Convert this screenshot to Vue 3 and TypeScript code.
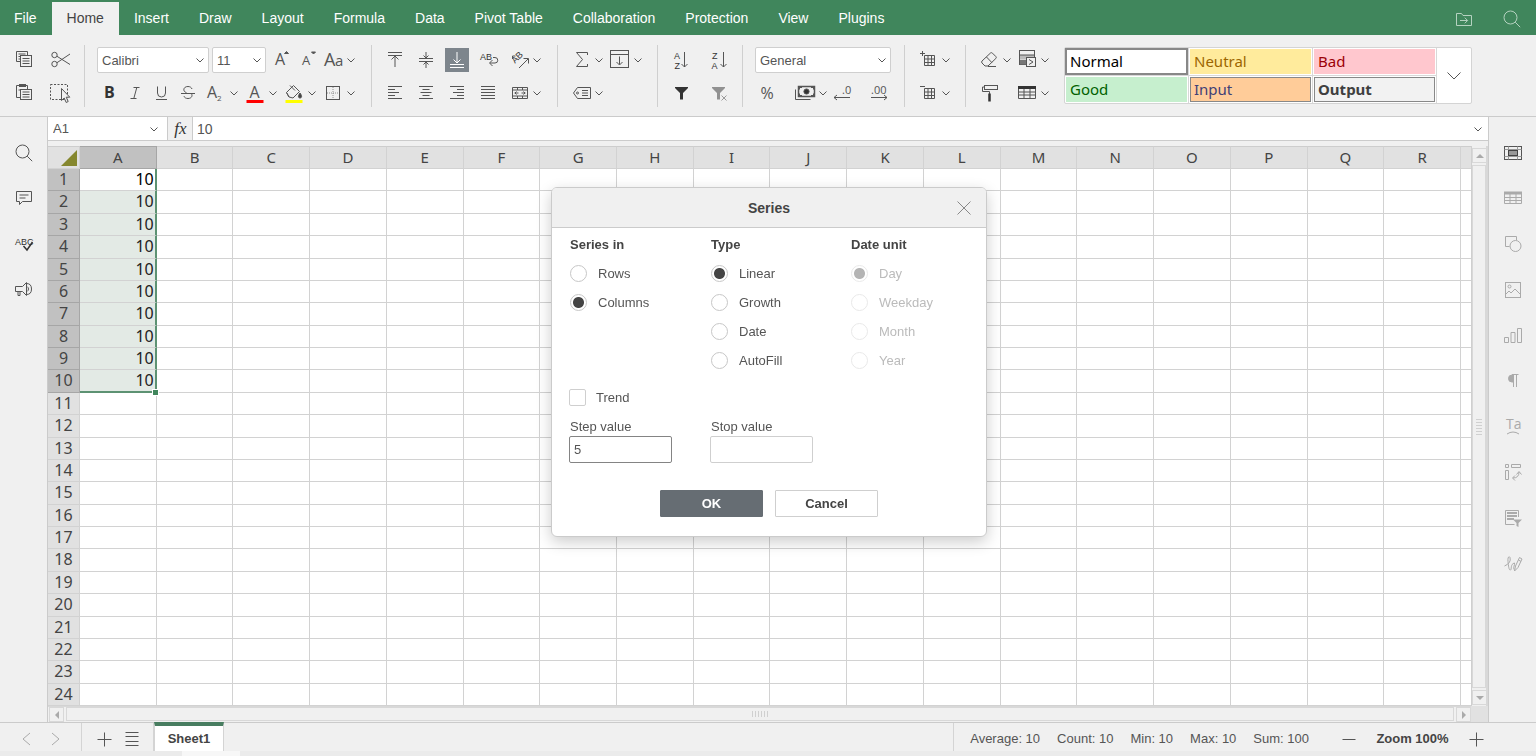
<script setup lang="ts">
import { h, ref } from 'vue'

const icons: Record<string, string> = {
  search: '<circle cx="10.5" cy="10.5" r="6.5"/><path d="M15.2 15.2l5 5"/>',
  folder: '<path d="M4.5 18.5v-12h5l1.500 2h8.500v10zM8 13.500h7.500M12.800 10.700l2.800 2.800-2.800 2.800"/>',
  copy: '<path d="M8 13.500H4.500v-10h11V7M6.500 6h7M6.500 8.500H8M6.500 11H8"/><rect x="8.500" y="7.500" width="11" height="11"/><path d="M10.500 10.500h7M10.500 13h7M10.500 15.500h7"/>',
  cut: '<circle cx="5.500" cy="7" r="2.700"/><circle cx="5.500" cy="16" r="2.700"/><path d="M8 8.300l13 8.200M8 14.700l13-8.700"/>',
  paste: '<path d="M8 16.500H4.500v-12h11V8M6.500 9H8"/><path d="M7 4.500h7" stroke-width="3"/><rect x="8.500" y="8.500" width="11" height="10"/><path d="M10.500 11h7M10.500 13.500h7M10.500 16h7"/>',
  selectAll: '<path d="M1.500 3.500h17v15h-17z" stroke-dasharray="2 1.500"/><path d="M12.500 7.500v12l2.700-2.500 2 4.500 2-1-2-4.300h3.600z" fill="#f0f0f0"/>',
  grow: '<text x="5" y="17" font-size="16">A</text><path d="M14.500 5.500l2-2 2 2z" fill="currentColor"/>',
  shrink: '<text x="6" y="17" font-size="13">A</text><path d="M15.500 4l2 2 2-2z" fill="currentColor"/>',
  caseAa: '<text x="3" y="18" font-size="18">A</text><text x="14" y="18" font-size="15">a</text>',
  bold: '<text x="6" y="17" font-size="16" font-weight="700" class="dark">B</text>',
  italic: '<path d="M9.500 6.500h6M6.500 17.500h6M12.800 6.500l-3 11"/>',
  underline: '<path d="M7.500 5.500v6.500a4 4 0 0 0 8 0V5.500M6 18.500h11"/>',
  strike: '<path d="M16 8c-.5-1.500-2-2.500-4-2.500-5 0-5.500 5-1.500 6.200M8 15.200c.5 1.500 2 2.300 4 2.300 4 0 5-3.500 3-5.300M5 12.500h14"/>',
  sub: '<text x="3" y="17" font-size="16">A</text><text x="13" y="19.500" font-size="8">2</text>',
  fontColor: '<text x="6.500" y="17" font-size="16">A</text><path d="M3.500 20.500h17" stroke="#f00" stroke-width="3"/>',
  fillColor: '<path d="M4.500 11.500l7-7 6 6-6.500 6.500-4-1zM4.500 11.500l2.500 4.500M8 4.500l5 5"/><path d="M18 12c3 4 1 5 0 5s-3-1 0-5z" fill="#444"/><path d="M3.500 20.500h17" stroke="#ff0" stroke-width="3"/>',
  borders: '<rect x="5.500" y="5.500" width="13" height="13"/><path d="M12 6v12M6 12h12" stroke-dasharray="1 1" opacity=".6"/>',
  top: '<path d="M5 4.500h14M5 7.500h14M12 8v11M8.500 11.500L12 8l3.500 3.500"/>',
  middle: '<path d="M5 10.500h14M5 13.500h14M12 4v6M9.500 7.500L12 10l2.500-2.500M12 20v-6M9.500 16.500L12 14l2.500 2.500"/>',
  bottom: '<path d="M5 16.500h14M5 19.500h14M12 4v11M8.500 11.500L12 15l3.500-3.500"/>',
  wrap: '<text x="4" y="12" font-size="9" class="dark plain">AB</text><path d="M17 9.500h2a2.700 2.700 0 0 1 0 5.500h-5M16.500 12L13.500 15l3 3"/>',
  orient: '<text x="6" y="15" font-size="9" class="dark plain" transform="rotate(-45 8 13)">AB</text><path d="M12 20l9-9M16.500 10.500H21.500V15.500M5.500 11v-3h3"/>',
  left: '<path d="M5 5.500h14M5 8.500h7M5 11.500h11M5 14.500h7M5 17.500h14"/>',
  center: '<path d="M5 5.500h14M8.500 8.500h7M6.500 11.500h11M8.500 14.500h7M5 17.500h14"/>',
  right: '<path d="M5 5.500h14M12 8.500h7M8 11.500h11M12 14.500h7M5 17.500h14"/>',
  justify: '<path d="M5 5.500h14M5 8.500h14M5 11.500h14M5 14.500h14M5 17.500h14"/>',
  merge: '<path d="M5.500 6.500h15v11h-15zM5.500 9h15M5.500 15h15M10.500 6.500V9M15.500 6.500V9M10.500 15v2.500M15.500 15v2.500M7.500 12h4M14.500 12h4M9.500 10.500L8 12l1.500 1.500M16.500 10.500L18 12l-1.500 1.500"/>',
  sum: '<path d="M18.500 7V4.500h-11l6 7-6 7h11V16"/>',
  fillDown: '<rect x="2.500" y="2.500" width="18" height="17"/><path d="M2.500 6.500h18M11.500 8.500v8M8.500 14l3 3 3-3"/>',
  named: '<path d="M8.500 6.500h13v11h-13l-4-5.500zM13 9.500h6M13 12h6M13 14.500h6"/><circle cx="8.500" cy="12" r="1"/>',
  sortAz: '<text x="5" y="10.500" font-size="9" class="dark plain">A</text><text x="5.500" y="20.500" font-size="9" class="dark plain">Z</text><path d="M15.500 4v15M12.500 16l3 3 3-3"/>',
  sortZa: '<text x="5" y="10.500" font-size="9" class="dark plain">Z</text><text x="4.500" y="20.500" font-size="9" class="dark plain">A</text><path d="M16.500 4v15M13.500 16l3 3 3-3"/>',
  filter: '<path d="M6 6h13v1l-5 5v6.500h-3V12L6 7z" fill="#333" stroke="none"/>',
  clearFilter: '<g opacity=".55"><path d="M5 6h13v1l-5 5v6.500h-3V12L5 7z" fill="#444" stroke="none"/><path d="M14.500 14.500l5 5M19.500 14.500l-5 5"/></g>',
  percent: '<text x="5.500" y="18" font-size="16">%</text>',
  money: '<path d="M2.500 8.500v10h15" /><rect x="5.500" y="5.500" width="16" height="10" stroke-width="1.500"/><circle cx="13.500" cy="10.500" r="2.600" fill="#333"/><path d="M6 8.500V6h3M18 6h3v2.500M6 12.500V15h3M18 15h3v-2.500" stroke-width="2"/>',
  decLess: '<text x="13" y="13" font-size="11">.0</text><path d="M5 16.500h16M8 14l-3 2.500L8 19"/>',
  decMore: '<text x="4" y="13" font-size="11">.00</text><path d="M4 16.500h16M17 14l3 2.500-3 2.500"/>',
  insertCells: '<path d="M8.500 7.500h10v10h-10zM8.500 11h10M8.500 14.500h10M12 7.500v10M15.500 7.500v10M4 5.500h5M6.500 3v5"/>',
  deleteCells: '<path d="M8.500 7.500h10v10h-10zM8.500 11h10M8.500 14.500h10M12 7.500v10M15.500 7.500v10M4 5.500h5"/>',
  eraser: '<path d="M5 13l8.500-8q1-.8 2 .2l3.300 3.300q1 1 0 2l-7.800 7.500H8L5 15q-.8-1 0-2zM9.500 9l5.300 5.500M11 18.500h8"/>',
  cond: '<rect x="4.500" y="2.500" width="15" height="14"/><path d="M5 7h14v4.500H5z" fill="#bbb" stroke="none"/><path d="M5 12h7v4.500H5z" fill="#777" stroke="none"/><path d="M4.500 7h15"/><rect x="11.500" y="9.500" width="9" height="9" fill="#f0f0f0"/><path d="M14 11.500l4 2.500-4 2.500"/>',
  roller: '<rect x="7.500" y="4.500" width="13" height="4"/><path d="M7.500 6H5.500v4.500h7V13"/><path d="M12.500 12.500v8" stroke="#333" stroke-width="2.500"/>',
  table: '<path d="M3.500 5.500h17v12h-17zM3.500 11h17M3.500 14h17M9 7v10.500M15 7v10.500"/><path d="M3 6.500h18" stroke="#333" stroke-width="3"/>',
  comment: '<path d="M4.500 5.500h15v10h-9L7.500 18.500v-3h-3zM7.500 9h9M7.500 12h6"/>',
  spell: '<text x="3" y="12.500" font-size="9" class="dark plain">ABC</text><path d="M11.500 14l3.500 4L20.500 10" stroke="#333" stroke-width="1.500"/>',
  speaker: '<path d="M3.500 9.500h7l4-4v13l-4-4h-7zM6 14.500v4h2v-4M14.500 6.500q5 0 5 5.500t-5 5.500M15 9.500q1.500 1 1.500 2.500T15 14.500"/>',
  cellSet: '<rect x="3.500" y="5.500" width="17" height="13" stroke="#555"/><path d="M7.500 5.500v13M16.500 5.500v13M3.500 8.500h17M3.500 15.500h17" stroke="#999"/><rect x="7.500" y="9.500" width="9" height="5" fill="#999" stroke="#444"/>',
  tableSet: '<path d="M3.500 6.500h17v11h-17zM3.500 11.500h17M3.500 14.500h17M9 8v9.500M15 8v9.500"/><path d="M3 7h18" stroke-width="3"/>',
  shape: '<path d="M8.500 14.500h-4v-10h11V8"/><circle cx="14.500" cy="14" r="5.500"/>',
  image: '<rect x="4.500" y="4.500" width="15" height="15"/><circle cx="8.500" cy="8.500" r="1.500"/><path d="M5 16l3-3 2 2 4-4 5.500 5.500"/>',
  chart: '<path d="M3.500 14.500h4v5h-4zM10 9.500h4v10h-4zM16.500 5.500h4v14h-4z"/>',
  para: '<path d="M12.500 6H11a3.500 3.500 0 0 0 0 7h1.500z" fill="currentColor"/><path d="M12.500 6v12M15.500 6v12M11 5.500h6.500"/>',
  textArt: '<text x="5" y="15" font-size="14">Ta</text><path d="M6 20q6-4 12 0"/>',
  pivot: '<path d="M4.500 4.500h3v3h-3zM10.500 4.500h9v3h-9zM4.500 10.500h3v9h-3zM12 18q6 0 6-6M15.500 14.500L18 11.500l2.500 3M14 15.500L11.500 18l2.500 2.500"/>',
  slicer: '<path d="M17.500 11V4.500h-13v14h9"/><path d="M6 7h10M6 10h10M6 13h7" stroke-width="1.800"/><path d="M12 13.500h9l-3.500 3.500v4l-2-1v-3z" fill="currentColor" stroke="none"/>',
  sign: '<path d="M3.500 15q7-3 5.500-8.500c-1-2-2.500 0-2 4 .5 5 1 9 2.500 8.500s-.5-6 4-7c.5 2-1.500 4-.5 6.500"/><path d="M13.500 20l1-5L18.500 6.500l2.500 1.500-4 8.500zM17.500 9l2.500 1.500"/>',
  prev: '<path d="M15 6l-7 6 7 6"/>',
  next: '<path d="M9 6l7 6-7 6"/>',
  plus: '<path d="M12.500 5.500v14M5.500 12.500h14"/>',
  minus: '<path d="M5.500 12.500h13"/>',
  list: '<path d="M5.500 5.500h13M5.500 9.500h13M5.500 14.500h13M5.500 18.500h13"/>',
  close: '<path d="M5.500 5.500l13 13M18.500 5.500l-13 13"/>',
}

const Icon = (props: { name: string }) =>
  h('svg', {
    viewBox: '0 0 24 24', width: 24, height: 24, fill: 'none', stroke: 'currentColor',
    class: 'ico', 'aria-hidden': 'true', innerHTML: icons[props.name],
  })
Icon.props = ['name']

const Caret = () =>
  h('svg', { viewBox: '0 0 12 12', width: 12, height: 12, fill: 'none', stroke: 'currentColor', class: 'caret', 'aria-hidden': 'true' },
    [h('path', { d: 'M2.500 4.500L6 8l3.500-3.500' })])

interface Tool { icon: string; label: string; menu?: boolean; wide?: boolean; active?: boolean; gap?: boolean }
const t = (icon: string, label: string, o: Partial<Tool> = {}): Tool => ({ icon, label, ...o })
const menu = { menu: true }

interface Combo { label: string; value: string; size: string }
interface Group { id: string; rows: { combos?: Combo[]; tools: Tool[] }[] }
const groups: Group[] = [
  { id: 'clip', rows: [
    { tools: [t('copy', 'Copy'), t('cut', 'Cut')] },
    { tools: [t('paste', 'Paste'), t('selectAll', 'Select all')] } ] },
  { id: 'font', rows: [
    { combos: [{ label: 'Font', value: 'Calibri', size: 'large' }, { label: 'Font size', value: '11', size: 'small' }],
      tools: [t('grow', 'Increase font size', { wide: true }), t('shrink', 'Decrease font size', { wide: true }), t('caseAa', 'Change case', menu)] },
    { tools: [t('bold', 'Bold', { wide: true }), t('italic', 'Italic', { wide: true }), t('underline', 'Underline', { wide: true }), t('strike', 'Strikeout', { wide: true }),
      t('sub', 'Subscript', { menu: true, gap: true }), t('fontColor', 'Font color', { menu: true, gap: true }), t('fillColor', 'Fill color', { menu: true, gap: true }), t('borders', 'Borders', { menu: true, gap: true })] } ] },
  { id: 'align', rows: [
    { tools: [t('top', 'Align top'), t('middle', 'Align middle'), t('bottom', 'Align bottom', { active: true }), t('wrap', 'Wrap text'), t('orient', 'Orientation', menu)] },
    { tools: [t('left', 'Align left'), t('center', 'Align center'), t('right', 'Align right'), t('justify', 'Justified'), t('merge', 'Merge and center', menu)] } ] },
  { id: 'edit', rows: [
    { tools: [t('sum', 'Summation', menu), t('fillDown', 'Fill', menu)] },
    { tools: [t('named', 'Named ranges', menu)] } ] },
  { id: 'sort', rows: [
    { tools: [t('sortAz', 'Sort ascending'), t('sortZa', 'Sort descending')] },
    { tools: [t('filter', 'Filter'), t('clearFilter', 'Clear filter')] } ] },
  { id: 'number', rows: [
    { combos: [{ label: 'Number format', value: 'General', size: 'wide' }], tools: [] },
    { tools: [t('percent', 'Percent style'), t('money', 'Accounting style', { menu: true, gap: true }), t('decLess', 'Decrease decimal'), t('decMore', 'Increase decimal', { gap: true })] } ] },
  { id: 'cells', rows: [
    { tools: [t('insertCells', 'Insert cells', menu)] },
    { tools: [t('deleteCells', 'Delete cells', menu)] } ] },
  { id: 'format', rows: [
    { tools: [t('eraser', 'Clear', menu), t('cond', 'Conditional formatting', menu)] },
    { tools: [t('roller', 'Copy style'), t('table', 'Format as table', { menu: true, gap: true })] } ] },
]

const tabs = ['File', 'Home', 'Insert', 'Draw', 'Layout', 'Formula', 'Data', 'Pivot Table', 'Collaboration', 'Protection', 'View', 'Plugins']
const cellStyles = ['Normal', 'Neutral', 'Bad', 'Good', 'Input', 'Output']
const leftTools = [['search', 'Find'], ['comment', 'Comments'], ['spell', 'Spell checking'], ['speaker', 'Feedback']]
const rightTools = [['cellSet', 'Cell settings'], ['tableSet', 'Table settings'], ['shape', 'Shape settings'], ['image', 'Image settings'], ['chart', 'Chart settings'],
  ['para', 'Paragraph settings'], ['textArt', 'Text Art settings'], ['pivot', 'Pivot table settings'], ['slicer', 'Slicer settings'], ['sign', 'Signature settings']]
const columns = 'ABCDEFGHIJKLMNOPQR'.split('')
const stats = ['Average: 10', 'Count: 10', 'Min: 10', 'Max: 10', 'Sum: 100']

const seriesIn = ref('Columns')
const seriesType = ref('Linear')
const dateUnit = ref('Day')
const trend = ref(false)
const step = ref('5')
const stop = ref('')
const nameBox = ref('A1')
const formula = ref('10')
</script>

<template>
  <div class="app">
    <header class="tabs">
      <nav>
        <button v-for="tab in tabs" :key="tab" :class="{ current: tab === 'Home' }">{{ tab }}</button>
      </nav>
      <div class="tab-actions">
        <button aria-label="Open file location"><Icon name="folder" /></button>
        <button aria-label="Search"><Icon name="search" /></button>
      </div>
    </header>

    <section class="toolbar">
      <div v-for="g in groups" :key="g.id" class="group" :class="g.id">
        <div v-for="(row, i) in g.rows" :key="i" class="row">
          <span v-for="c in row.combos" :key="c.label" class="combo" :class="c.size">
            <select :aria-label="c.label"><option>{{ c.value }}</option></select>
            <Caret />
          </span>
          <button v-for="b in row.tools" :key="b.icon" class="tool" :aria-label="b.label"
            :class="{ wide: b.wide, active: b.active, gap: b.gap }">
            <Icon :name="b.icon" /><Caret v-if="b.menu" />
          </button>
        </div>
      </div>
      <div class="gallery">
        <div class="styles">
          <button v-for="s in cellStyles" :key="s" :class="s.toLowerCase()"><span>{{ s }}</span></button>
        </div>
        <button class="more" aria-label="More styles">
          <svg viewBox="0 0 16 10" width="16" height="10" fill="none" stroke="currentColor"><path d="M1.500 1.500L8 8l6.500-6.500" /></svg>
        </button>
      </div>
    </section>

    <main>
      <aside class="side left">
        <button v-for="[icon, label] in leftTools" :key="icon" :aria-label="label"><Icon :name="icon" /></button>
      </aside>

      <div class="work">
        <div class="formula">
          <div class="name-box">
            <input v-model="nameBox" aria-label="Name box" />
            <button aria-label="Names"><Caret /></button>
          </div>
          <button class="fx" aria-label="Insert function"><i>fx</i></button>
          <input v-model="formula" class="formula-input" aria-label="Formula" />
          <button class="expand" aria-label="Expand formula bar"><Caret /></button>
        </div>

        <div class="sheet">
          <table>
            <thead>
              <tr>
                <th class="corner"><svg viewBox="0 0 16 16" width="16" height="16"><path d="M16 0v16H0z" fill="#85872e" /></svg></th>
                <th v-for="c in columns" :key="c" :class="{ sel: c === 'A' }" scope="col">{{ c }}</th>
                <th></th>
              </tr>
            </thead>
            <tbody>
              <tr v-for="r in 24" :key="r">
                <th scope="row" :class="{ sel: r <= 10 }">{{ r }}</th>
                <td v-for="c in columns" :key="c" :class="{ picked: c === 'A' && r <= 10, first: r === 1, last: r === 10 }">
                  <template v-if="c === 'A' && r <= 10">10</template>
                  <span v-if="c === 'A' && r === 10" class="handle"></span>
                </td>
                <td></td>
              </tr>
            </tbody>
          </table>
          <div class="scroll vertical">
            <button aria-label="Scroll up"><svg viewBox="0 0 8 8" width="8" height="8"><path d="M4 2l4 4H0z" /></svg></button>
            <div class="thumb"><span></span></div>
            <button aria-label="Scroll down"><svg viewBox="0 0 8 8" width="8" height="8"><path d="M4 6l4-4H0z" /></svg></button>
          </div>
          <div class="scroll horizontal">
            <button aria-label="Scroll left"><svg viewBox="0 0 8 8" width="8" height="8"><path d="M2 4l4-4v8z" /></svg></button>
            <div class="thumb"><span></span></div>
            <button aria-label="Scroll right"><svg viewBox="0 0 8 8" width="8" height="8"><path d="M6 4L2 0v8z" /></svg></button>
          </div>
          <div class="scroll-corner"></div>
        </div>
      </div>

      <aside class="side right">
        <button v-for="[icon, label] in rightTools" :key="icon" :aria-label="label"><Icon :name="icon" /></button>
      </aside>
    </main>

    <footer>
      <div class="sheet-nav">
        <button aria-label="Previous sheet"><Icon name="prev" /></button>
        <button aria-label="Next sheet"><Icon name="next" /></button>
      </div>
      <div class="sheet-add">
        <button aria-label="Add sheet"><Icon name="plus" /></button>
        <button aria-label="List of sheets"><Icon name="list" /></button>
      </div>
      <button class="sheet-tab">Sheet1</button>
      <div class="status">
        <span v-for="s in stats" :key="s">{{ s }}</span>
      </div>
      <div class="zoom">
        <button aria-label="Zoom out"><Icon name="minus" /></button>
        <button class="zoom-value">Zoom 100%</button>
        <button aria-label="Zoom in"><Icon name="plus" /></button>
      </div>
    </footer>
    <div class="edge"><span></span></div>

    <div class="overlay">
      <form class="dialog" role="dialog" aria-labelledby="dlg-title" @submit.prevent>
        <div class="title">
          <h2 id="dlg-title">Series</h2>
          <button type="button" aria-label="Close"><Icon name="close" /></button>
        </div>
        <div class="choices">
          <fieldset>
            <legend>Series in</legend>
            <label v-for="o in ['Rows', 'Columns']" :key="o"><input v-model="seriesIn" type="radio" name="in" :value="o" />{{ o }}</label>
          </fieldset>
          <fieldset>
            <legend>Type</legend>
            <label v-for="o in ['Linear', 'Growth', 'Date', 'AutoFill']" :key="o"><input v-model="seriesType" type="radio" name="type" :value="o" />{{ o }}</label>
          </fieldset>
          <fieldset class="off">
            <legend>Date unit</legend>
            <label v-for="o in ['Day', 'Weekday', 'Month', 'Year']" :key="o"><input v-model="dateUnit" type="radio" name="unit" :value="o" disabled />{{ o }}</label>
          </fieldset>
        </div>
        <label class="trend"><input v-model="trend" type="checkbox" />Trend</label>
        <div class="values">
          <div><label for="step">Step value</label><input id="step" v-model="step" class="focused" type="text" /></div>
          <div><label for="stop">Stop value</label><input id="stop" v-model="stop" type="text" /></div>
        </div>
        <div class="actions">
          <button type="submit" class="ok">OK</button>
          <button type="button">Cancel</button>
        </div>
      </form>
    </div>
  </div>
</template>

<style>
body { margin: 0; background: #f0f0f0; }
.ico { overflow: visible; }
.ico text { fill: currentColor; stroke: none; font-family: "Open Sans", "Noto Sans", sans-serif; }
.ico text.dark { fill: #333; }
.ico text.plain { font-family: "Liberation Sans", Arial, sans-serif; }
</style>

<style scoped>
* { box-sizing: border-box; }
.app {
  display: flex; flex-direction: column; min-height: 100vh;
  font-family: "Liberation Sans", Arial, sans-serif; font-size: 13px; color: #555; background: #f0f0f0;
}
button, input, select { font: inherit; color: inherit; margin: 0; padding: 0; border: 0; background: none; outline: none; border-radius: 0; }
button { display: flex; align-items: center; justify-content: center; }
.ico, .caret { display: block; flex: none; }

.tabs { display: flex; justify-content: space-between; height: 35px; background: #40865c; }
.tabs nav { display: flex; align-items: flex-end; }
.tabs nav button { height: 33px; padding: 0 15px 2px; font-size: 14px; color: #fff; }
.tabs nav button:first-child { padding-left: 14px; }
.tabs nav .current { background: #f0f0f0; color: #444; }
.tab-actions { display: flex; align-items: center; gap: 24px; padding: 2px 12px 0 0; color: #b5d2c0; }

.toolbar { display: flex; height: 82px; padding-top: 10px; border-bottom: 1px solid #cbcbcb; }
.group { display: flex; flex-direction: column; gap: 7px; height: 62px; padding: 2px 11px 0; border-right: 1px solid #cfcfcf; }
.row { display: flex; height: 26px; align-items: center; }
.tool { height: 24px; min-width: 24px; }
.tool.wide { width: 26px; }
.tool.active { background: #7d858c; color: #fff; }
.clip { width: 85px; padding-left: 12px; }
.clip .row { gap: 13px; }
.font { width: 287px; padding: 2px 0 0 12px; }
.font .gap { margin-left: 3px; }
.align { width: 186px; }
.align .row { gap: 7px; }
.edit { width: 100px; }
.edit .row { gap: 3px; }
.format .row { gap: 2px; }
.sort { width: 85px; }
.sort .row { gap: 14px; }
.number { width: 162px; padding-left: 12px; }
.number .gap { margin-left: 14px; }
.cells { width: 61px; }
.format { width: 86px; padding-right: 0; border-right: 0; }
.format .gap { margin-left: 12px; }
.combo { display: grid; align-items: center; margin-right: 3px; height: 26px; }
.combo > * { grid-area: 1 / 1; }
.combo select { appearance: none; width: 100%; height: 26px; padding: 0 4px; border: 1px solid #cfcfcf; border-radius: 2px; background: #fff; }
.combo .caret { justify-self: end; margin-right: 3px; pointer-events: none; }
.combo.large { width: 112px; }
.combo.small { width: 54px; }
.combo.wide { width: 136px; margin: 0; }

.gallery { display: flex; width: 408px; height: 57px; margin: 2px 0 0 12px; border: 1px solid #d4d4d4; border-radius: 2px; background: #fff; }
.styles { display: grid; grid-template-columns: repeat(3, 1fr); flex: 1; }
.styles button { padding: 1px; border-right: 1px solid #d8d8d8; border-bottom: 1px solid #d8d8d8; font: 15px "Noto Sans", sans-serif; }
.styles button:nth-child(n + 4) { border-bottom: 0; }
.styles span { flex: 1; height: 25px; padding-left: 4px; line-height: 25px; text-align: left; border: 0 solid #888; }
.styles .normal { padding: 0; }
.styles .normal span { height: 27px; padding-left: 3px; color: #000; border-width: 2px; line-height: 23px; }
.styles .neutral span { background: #ffeb9c; color: #9c6500; }
.styles .bad span { background: #ffc7ce; color: #9c0006; }
.styles .good span { background: #c6efce; color: #006100; }
.styles .input span { background: #ffcc99; color: #3f3f76; border-width: 1px; padding-left: 3px; line-height: 23px; }
.styles .output span { background: #f2f2f2; color: #3f3f3f; border-width: 1px; font-weight: 700; padding-left: 3px; line-height: 23px; }
.more { width: 34px; }

main { display: flex; flex: 1; }
.side { display: grid; flex: none; grid-auto-rows: 1fr; width: 48px; margin-top: 13px; }
.left { height: 182px; }
.right { width: 47px; height: 456px; color: #aaa; }
.side button { width: 100%; }
.right button { padding-left: 1px; }
.work { display: flex; flex: 1; flex-direction: column; min-width: 0; border-left: 1px solid #cbcbcb; border-right: 1px solid #cbcbcb; margin-left: -1px; }
.formula { display: flex; height: 24px; margin-bottom: 5px; background: #fff; border-bottom: 1px solid #cbcbcb; }
.name-box { display: flex; width: 120px; border-right: 1px solid #cbcbcb; }
.name-box input { flex: 1; width: 50px; padding-left: 5px; }
.name-box button { width: 26px; }
.fx { width: 25px; padding-left: 1px; background: #f0f0f0; border-right: 1px solid #cbcbcb; font: 17px "Liberation Serif", serif; color: #333; }
.formula-input { flex: 1; padding-left: 4px; font-size: 14px; }
.expand { width: 20px; }

.sheet { display: grid; flex: 1; grid-template-columns: 1fr 17px; grid-template-rows: 1fr 16px; }
table { display: grid; grid-template-columns: 32px repeat(18, minmax(0, 1fr)) 10px; grid-template-rows: 23px repeat(24, 1fr); background: #fff; font: 16px "Noto Sans", sans-serif; }
thead, tbody, tr { display: contents; }
th, td { padding: 0; min-width: 0; line-height: 21px; border-right: 1px solid #d2d2d2; border-bottom: 1px solid #d2d2d2; }
th { background: #e1e1e1; color: #444; font-weight: 400; text-align: center; }
thead th { border-top: 1px solid #cdcdcd; font-size: 15px; }
.corner svg { display: block; margin: 3px 2px 0 auto; }
th.sel { background: #c1c1c1; border-color: #a6a6a6; }
td:last-child, thead th:last-child { border-right: 0; }
.picked { position: relative; padding-right: 1px; text-align: right; color: #222; background: #e3eae5; border-right: 2px solid #5d9273; }
.picked.first { background: #fff; color: #000; }
.picked.last { border-bottom-color: #5d9273; box-shadow: inset 0 -1px #5d9273; }
.handle { position: absolute; right: -3px; bottom: -3px; width: 5px; height: 5px; background: #40865c; border: 1px solid #fff; box-sizing: content-box; margin: -1px; }

.scroll { display: flex; gap: 2px; background: #f0f0f0; }
.scroll svg { display: block; fill: #aaa; }
.scroll button { flex: none; width: 15px; height: 15px; border: 1px solid #d8d8d8; }
.scroll .thumb { display: flex; flex: 1; align-items: center; justify-content: center; border: 1px solid #d8d8d8; }
.vertical { flex-direction: column; padding: 2px 0 1px; border-left: 1px solid #cfcfcf; border-right: 2px solid #d8d8d8; }
.horizontal { padding: 0 0 1px 1px; border-top: 1px solid #d8d8d8; }
.vertical .thumb { width: 14px; }
.vertical .thumb span { width: 6px; height: 16px; background: repeating-linear-gradient(#d0d0d0 0 1px, transparent 1px 3px); }
.horizontal .thumb span { width: 16px; height: 6px; background: repeating-linear-gradient(90deg, #d0d0d0 0 1px, transparent 1px 3px); }
.scroll-corner { background: #e1e1e1; }

footer { display: flex; height: 29px; border-top: 1px solid #cbcbcb; }
.sheet-nav { display: flex; gap: 4px; width: 82px; padding-left: 15px; color: #aaa; border-right: 1px solid #d4d4d4; }
.sheet-add { display: flex; gap: 4px; width: 72px; padding-left: 10px; border-right: 1px solid #d4d4d4; }
footer button { padding-top: 3px; }
.sheet-tab { width: 70px; margin-top: -1px; padding: 0; font-weight: 700; color: #444; background: #fff; border-top: 4px solid #487d60; border-right: 1px solid #d4d4d4; border-left: 1px solid #d4d4d4; }
.status { display: flex; align-items: center; gap: 17px; margin-left: auto; padding: 3px 0 0 16px; border-left: 1px solid #d4d4d4; }
.zoom { display: flex; margin-left: 28px; padding-right: 48px; }
.zoom-value { width: 103px; font-weight: 700; color: #444; }
.edge { height: 5px; background: #ebebeb; }
.edge span { display: block; width: 58px; height: 5px; margin-left: 182px; background: #f7f7f7; }

.overlay { position: fixed; inset: 0; display: flex; justify-content: center; align-items: flex-start; padding: 187px 0 0 2px; }
.dialog { width: 436px; padding-bottom: 19px; background: #fff; border: 1px solid #cbcbcb; border-radius: 6px; box-shadow: 0 5px 15px rgba(0, 0, 0, .2); }
.title { display: grid; align-items: center; height: 40px; background: #f0f0f0; border-bottom: 1px solid #cbcbcb; border-radius: 5px 5px 0 0; }
.title > * { grid-area: 1 / 1; }
.title h2 { margin: 0; font-size: 14px; text-align: center; color: #444; }
.title button { justify-self: end; width: 24px; margin-right: 10px; color: #888; }
.choices { display: flex; padding: 7px 0 0 18px; }
fieldset { flex: none; width: 140px; min-width: 0; margin: 0; padding: 0; border: 0; }
fieldset:first-child { width: 141px; }
fieldset.off { width: 110px; }
legend { padding: 0; line-height: 20px; font-weight: 700; color: #444; }
fieldset label { display: flex; align-items: center; gap: 11px; height: 29px; }
fieldset legend + label { margin-top: 4px; }
.off label { color: #bbb; }
[type="radio"] { appearance: none; width: 17px; height: 17px; border: 1px solid #c6c6c6; border-radius: 50%; background: #fff; }
[type="radio"]:checked { background: radial-gradient(circle, #444 0 5px, #fff 6px); }
[type="radio"]:disabled { opacity: .4; }
.trend { display: flex; align-items: center; gap: 10px; margin: 14px 17px 0; height: 17px; }
[type="checkbox"] { appearance: none; width: 17px; height: 17px; border: 1px solid #cfcfcf; border-radius: 2px; }
.values { display: flex; gap: 38px; padding: 12px 17px 0; }
.values div { display: flex; flex-direction: column; width: 103px; }
.values label { line-height: 18px; padding-left: 1px; }
.values input { width: 100%; height: 27px; padding: 0 4px; border: 1px solid #cfcfcf; border-radius: 2px; }
.values .focused { border-color: #848484; }
.actions { display: flex; gap: 12px; justify-content: center; margin-top: 27px; }
.actions button { width: 103px; height: 27px; border: 1px solid #cfcfcf; border-radius: 1px; font-weight: 700; color: #444; background: #fff; }
.actions .ok { background: #666d73; border-color: #666d73; color: #fff; }
</style>
